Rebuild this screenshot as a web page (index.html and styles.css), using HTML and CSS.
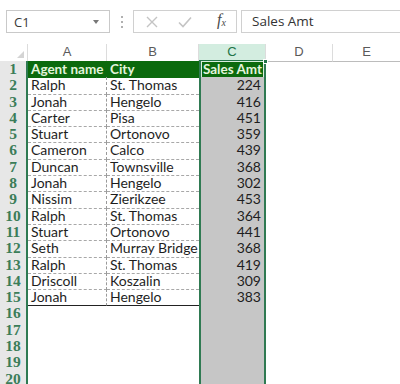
FILE: index.html
```
<!DOCTYPE html>
<html>
<head>
<meta charset="utf-8">
<link rel="stylesheet" href="styles.css">
</head>
<body>
<div class="toolbar">
  <div class="namebox"><span class="nb-text">C1</span><span class="nb-arrow"></span></div>
  <div class="sep"><i></i><i></i><i></i></div>
  <div class="fbtns">
    <svg class="ic-x" width="12" height="12" viewBox="0 0 12 12"><path d="M1 1L11 11M11 1L1 11" stroke="#c4c4c4" stroke-width="1.4" fill="none"/></svg>
    <svg class="ic-ok" width="14" height="12" viewBox="0 0 14 12"><path d="M1 6.5L5 10.5L13 1.5" stroke="#c4c4c4" stroke-width="1.6" fill="none"/></svg>
    <span class="fx">f<sub>x</sub></span>
  </div>
  <div class="finput">Sales Amt</div>
</div>
<div class="sheet">
  <div class="row hdr">
    <div class="rh corner"><span class="tri"></span></div>
    <div class="ch">A</div><div class="ch">B</div><div class="ch sel">C</div><div class="ch">D</div><div class="ch last">E</div>
  </div>
  <div class="row th">
    <div class="rh">1</div>
    <div class="a">Agent name</div><div class="b">City</div><div class="c active">Sales Amt<span class="handle"></span></div><div class="d"></div><div class="e"></div>
  </div>
  <div class="row t"><div class="rh">2</div><div class="a">Ralph</div><div class="b">St. Thomas</div><div class="c">224</div><div class="d"></div><div class="e"></div></div>
  <div class="row t"><div class="rh">3</div><div class="a">Jonah</div><div class="b">Hengelo</div><div class="c">416</div><div class="d"></div><div class="e"></div></div>
  <div class="row t"><div class="rh">4</div><div class="a">Carter</div><div class="b">Pisa</div><div class="c">451</div><div class="d"></div><div class="e"></div></div>
  <div class="row t"><div class="rh">5</div><div class="a">Stuart</div><div class="b">Ortonovo</div><div class="c">359</div><div class="d"></div><div class="e"></div></div>
  <div class="row t"><div class="rh">6</div><div class="a">Cameron</div><div class="b">Calco</div><div class="c">439</div><div class="d"></div><div class="e"></div></div>
  <div class="row t"><div class="rh">7</div><div class="a">Duncan</div><div class="b">Townsville</div><div class="c">368</div><div class="d"></div><div class="e"></div></div>
  <div class="row t"><div class="rh">8</div><div class="a">Jonah</div><div class="b">Hengelo</div><div class="c">302</div><div class="d"></div><div class="e"></div></div>
  <div class="row t"><div class="rh">9</div><div class="a">Nissim</div><div class="b">Zierikzee</div><div class="c">453</div><div class="d"></div><div class="e"></div></div>
  <div class="row t"><div class="rh">10</div><div class="a">Ralph</div><div class="b">St. Thomas</div><div class="c">364</div><div class="d"></div><div class="e"></div></div>
  <div class="row t"><div class="rh">11</div><div class="a">Stuart</div><div class="b">Ortonovo</div><div class="c">441</div><div class="d"></div><div class="e"></div></div>
  <div class="row t"><div class="rh">12</div><div class="a">Seth</div><div class="b">Murray Bridge</div><div class="c">368</div><div class="d"></div><div class="e"></div></div>
  <div class="row t"><div class="rh">13</div><div class="a">Ralph</div><div class="b">St. Thomas</div><div class="c">419</div><div class="d"></div><div class="e"></div></div>
  <div class="row t"><div class="rh">14</div><div class="a">Driscoll</div><div class="b">Koszalin</div><div class="c">309</div><div class="d"></div><div class="e"></div></div>
  <div class="row t tlast"><div class="rh">15</div><div class="a">Jonah</div><div class="b">Hengelo</div><div class="c">383</div><div class="d"></div><div class="e"></div></div>
  <div class="row em"><div class="rh">16</div><div class="a"></div><div class="b"></div><div class="c"></div><div class="d"></div><div class="e"></div></div>
  <div class="row em"><div class="rh">17</div><div class="a"></div><div class="b"></div><div class="c"></div><div class="d"></div><div class="e"></div></div>
  <div class="row em"><div class="rh">18</div><div class="a"></div><div class="b"></div><div class="c"></div><div class="d"></div><div class="e"></div></div>
  <div class="row em"><div class="rh">19</div><div class="a"></div><div class="b"></div><div class="c"></div><div class="d"></div><div class="e"></div></div>
  <div class="row em"><div class="rh">20</div><div class="a"></div><div class="b"></div><div class="c"></div><div class="d"></div><div class="e"></div></div>
</div>
</body>
</html>
```

FILE: styles.css
```
* { box-sizing: border-box; }
html, body { margin: 0; padding: 0; background: #fff; }
body { width: 400px; height: 384px; overflow: hidden; font-family: "Lato", "Liberation Sans", sans-serif; }

.toolbar { display: flex; align-items: center; height: 44px; padding: 10px 0 11px 6px; }
.namebox { width: 104px; height: 23px; border: 1px solid #c9c9c9; display: flex; align-items: center; justify-content: space-between; padding: 0 10px 0 7px; }
.nb-text { font-size: 13px; color: #3a3a3a; font-family: "Open Sans", sans-serif; }
.nb-arrow { width: 0; height: 0; border-left: 3.5px solid transparent; border-right: 3.5px solid transparent; border-top: 4px solid #777; }
.sep { width: 23px; display: flex; flex-direction: column; align-items: center; gap: 3px; }
.sep i { width: 2px; height: 2px; background: #b0b0b0; display: block; }
.fbtns { width: 104px; height: 23px; border: 1px solid #d0d0d0; display: flex; align-items: center; padding: 0 10px 0 12px; }
.ic-ok { margin-left: 20px; }
.fx { margin-left: auto; font-family: "Liberation Serif", serif; font-style: italic; font-size: 16px; line-height: 16px; color: #4a4a4a; }
.fx sub { font-size: 10px; vertical-align: -1px; }
.finput { flex: 1; margin-left: 4px; height: 23px; border: 1px solid #d0d0d0; border-right: none; font-family: "Open Sans", sans-serif; font-size: 13.5px; color: #333; padding: 1px 0 0 10px; line-height: 19px; }

.sheet { display: flex; flex-direction: column; }
.row { display: grid; grid-template-columns: 28px 79px 92px 67px 67px 67px; height: 16.3px; font-size: 14px; line-height: 16px; color: #1e1e1e; }
.row.hdr { height: 17px; }
.row > div { position: relative; white-space: nowrap; overflow: visible; }

.hdr .ch { text-align: center; color: #5a5a5a; font-family: "Liberation Sans", sans-serif; font-size: 13px; line-height: 16px; border-right: 1px solid #dcdcdc; border-bottom: 1px solid #bcbcbc; }
.hdr .ch.last { border-right: none; }
.hdr .ch.sel { background: #d3ede0; color: #217346; border-bottom: 2px solid #217346; }
.hdr .corner { border-right: 1px solid #dcdcdc; border-bottom: 1px solid #bcbcbc; background: #fff; }
.tri { position: absolute; right: 3px; bottom: 3px; width: 0; height: 0; border-left: 7px solid transparent; border-bottom: 7px solid #d4d4d4; }

.rh { background: #e7e7e7; color: #3b7d59; font-family: "Liberation Serif", serif; font-weight: bold; font-size: 15.5px; text-align: center; line-height: 16.3px; border-right: 2px solid #2f7a52; border-bottom: 1px solid #d8d8d8; }
.hdr .rh { border-right: 1px solid #dcdcdc; }

.a { padding-left: 3px; }
.b { padding-left: 3px; }
.c { background: #c6c6c6; border-left: 2px solid #2f7a52; border-right: 2px solid #2f7a52; text-align: right; padding-right: 3px; }

.th .a, .th .b { background: #0b6a0d; color: #e3f4dc; font-weight: bold; font-size: 13.5px; }
.th .c.active { background: #0b6a0d; color: #e3f4dc; font-weight: bold; font-size: 13.5px; box-shadow: inset 0 0 0 1px #d8eedd; padding-right: 2px; }
.handle { position: absolute; right: -4px; top: -2px; width: 5px; height: 5px; background: #217346; border: 1px solid #fff; }

.t .a { border-right: 1px dashed #9a9a9a; border-bottom: 1px dashed #a8a8a8; }
.t .b { border-bottom: 1px dashed #a8a8a8; }
.t .c { border-bottom: 1px dashed #8e8e8e; }
.tlast .a, .tlast .b, .tlast .c { border-bottom: 1px solid #222; }
```
